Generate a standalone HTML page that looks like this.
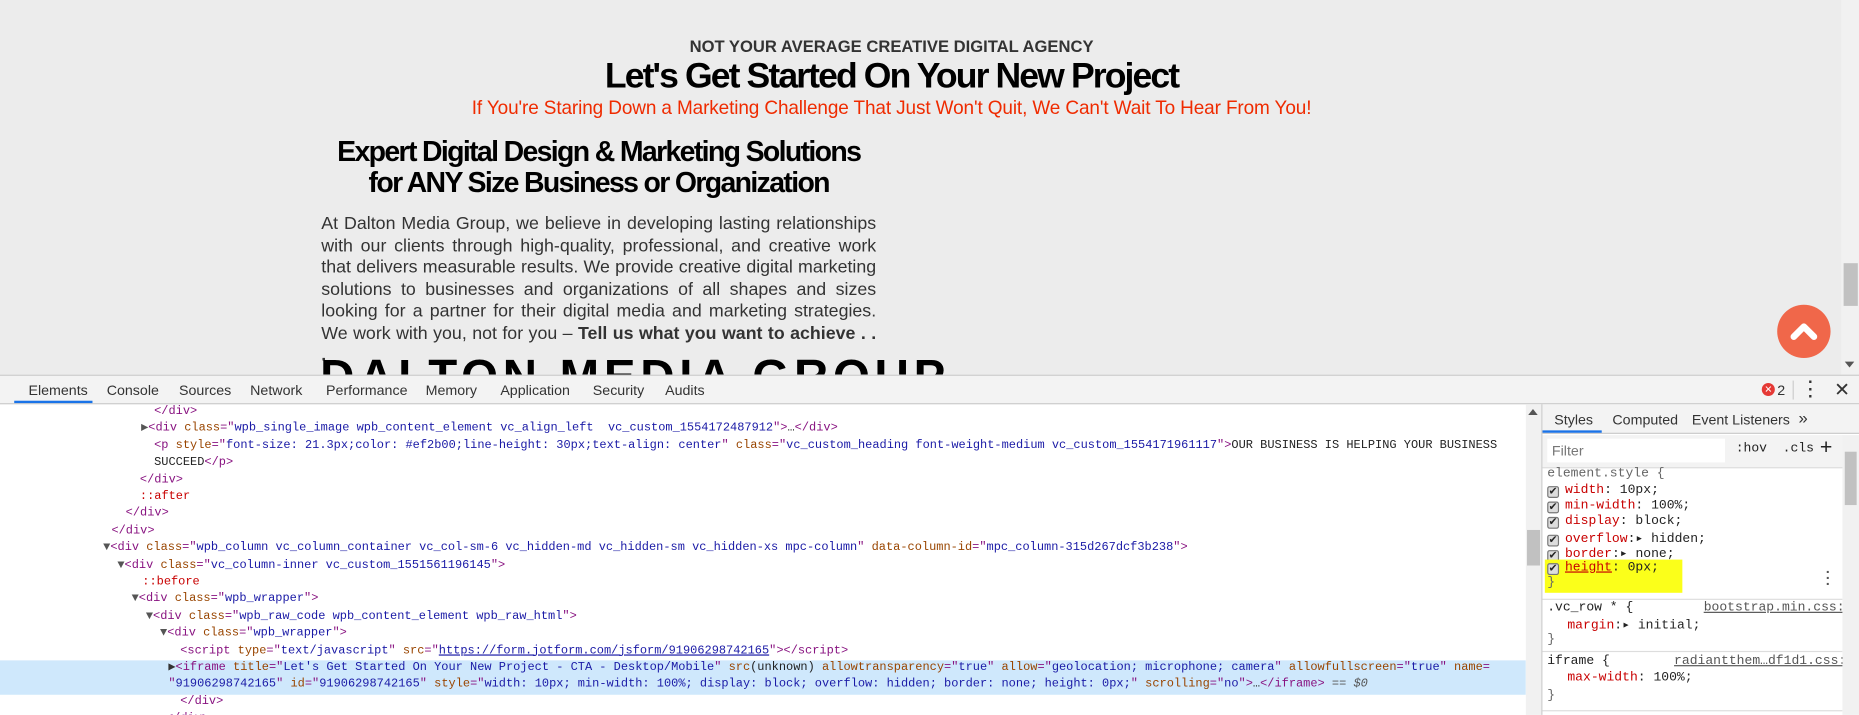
<!DOCTYPE html>
<html><head><meta charset="utf-8"><style>
*{margin:0;padding:0;box-sizing:border-box}
html,body{width:1859px;height:715px;overflow:hidden;background:#fff}
body{font-family:"Liberation Sans",sans-serif;position:relative}
#wrap{position:absolute;left:0;top:0;width:1568px;height:603px;transform:scale(1.18559);transform-origin:0 0}
#page{position:absolute;left:0;top:0;width:1568px;height:316px;background:#ececec;overflow:hidden}
.c{position:absolute;left:0;width:1504px;text-align:center;white-space:nowrap}
.bt{position:absolute;left:1555px;top:222px;width:12px;height:36px;background:#c1c1c1}
#tabs{position:absolute;left:0;top:316px;width:1568px;height:25px;background:#f3f3f3;border-top:1px solid #ccc;border-bottom:1px solid #ccc;font-size:12px;color:#333}
#tabs span{position:absolute;top:5px}
#el{position:absolute;left:0;top:341px;width:1287px;height:262px;font-family:"Liberation Mono",monospace;font-size:10.1px;white-space:pre;color:#222;overflow:hidden}
.l{position:absolute;height:14.4px;line-height:14.4px;left:0;width:1287px}
.t{color:#881280}.a{color:#994500}.v{color:#1a1aa6}.p{color:#c80000}.g{color:#555}
#sty{position:absolute;left:1300px;top:341px;width:268px;height:262px;border-left:1px solid #ccc;font-family:"Liberation Mono",monospace;font-size:11px;color:#222;overflow:hidden}
.r{position:absolute;white-space:pre}
.cb{display:inline-block;width:10px;height:10px;border:1px solid #777;background:#ddd;border-radius:2px;margin-right:5px;vertical-align:-1px;font-size:9px;line-height:8px;text-align:center;font-family:"DejaVu Sans";}
.pr{color:#c80000}
</style></head><body>
<div id="wrap">
<div id="page">
<div class="c" style="top:31px;font-size:14px;font-weight:bold;color:#333;">NOT YOUR AVERAGE CREATIVE DIGITAL AGENCY</div>
<div class="c" style="top:48px;font-size:30px;font-weight:bold;color:#000;letter-spacing:-1.6px">Let's Get Started On Your New Project</div>
<div class="c" style="top:83px;font-size:16px;color:#ef2b00;letter-spacing:-0.1px">If You're Staring Down a Marketing Challenge That Just Won't Quit, We Can't Wait To Hear From You!</div>
<div style="position:absolute;left:270px;width:470px;top:116px;text-align:center;font-size:24px;font-weight:bold;line-height:26px;letter-spacing:-1.4px;color:#000">Expert Digital Design &amp; Marketing Solutions<br>for ANY Size Business or Organization</div>
<div style="position:absolute;left:271px;width:468px;top:180px;font-size:15px;line-height:18.5px;color:#333;text-align:justify">At Dalton Media Group, we believe in developing lasting relationships with our clients through high-quality, professional, and creative work that delivers measurable results. We provide creative digital marketing solutions to businesses and organizations of all shapes and sizes looking for a partner for their digital media and marketing strategies. We work with you, not for you – <b>Tell us what you want to achieve . . .</b></div>
<div style="position:absolute;left:270px;top:296px;font-size:40px;font-weight:900;letter-spacing:4px;color:#000">DALTON MEDIA GROUP</div>
<div style="position:absolute;left:1499px;top:257px;width:45px;height:45px;border-radius:50%;background:#f0674a"></div>
<svg style="position:absolute;left:1499px;top:257px" width="45" height="45"><path d="M14 27 L22.5 18.5 L31 27" stroke="#fff" stroke-width="5.5" fill="none" stroke-linecap="round" stroke-linejoin="round"/></svg>
<div style="position:absolute;left:1553px;top:0;width:15px;height:316px;background:#f1f1f1"></div>
<div class="bt"></div>
<div style="position:absolute;left:1556px;top:305px;border:4px solid transparent;border-top:5px solid #555"></div>
</div>
<div id="tabs">
<div style="position:absolute;left:12px;top:0;width:66px;height:23px;border-bottom:2px solid #1a73e8"></div>
<span style="left:24px">Elements</span><span style="left:90px">Console</span><span style="left:151px">Sources</span><span style="left:211px">Network</span><span style="left:275px">Performance</span><span style="left:359px">Memory</span><span style="left:422px">Application</span><span style="left:500px">Security</span><span style="left:561px">Audits</span>
<div style="position:absolute;left:1486px;top:6px;width:11px;height:11px;border-radius:50%;background:#e53935;color:#fff;font-size:8px;line-height:11px;text-align:center">✕</div>
<span style="left:1499px;top:5px">2</span>
<div style="position:absolute;left:1512px;top:4px;width:1px;height:16px;background:#ccc"></div>
<span style="left:1525px;top:2px;font-weight:bold;line-height:6px;font-size:14px">·<br>·<br>·</span>
<span style="left:1547px;top:2px;font-size:16px">✕</span>
</div>
<div id="el">
<div class="l" style="top:0"><span style="margin-left:130px" class="t">&lt;/div&gt;</span></div>
<div class="l" style="top:14.4px"><span style="margin-left:119px" class="g">▶</span><span class="t">&lt;div </span><span class="a">class</span><span class="t">="</span><span class="v">wpb_single_image wpb_content_element vc_align_left  vc_custom_1554172487912</span><span class="t">"&gt;</span>…<span class="t">&lt;/div&gt;</span></div>
<div class="l" style="top:28.8px"><span style="margin-left:130px" class="t">&lt;p </span><span class="a">style</span><span class="t">="</span><span class="v">font-size: 21.3px;color: #ef2b00;line-height: 30px;text-align: center</span><span class="t">" </span><span class="a">class</span><span class="t">="</span><span class="v">vc_custom_heading font-weight-medium vc_custom_1554171961117</span><span class="t">"&gt;</span>OUR BUSINESS IS HELPING YOUR BUSINESS</div>
<div class="l" style="top:43.2px"><span style="margin-left:130px">SUCCEED</span><span class="t">&lt;/p&gt;</span></div>
<div class="l" style="top:57.6px"><span style="margin-left:118px" class="t">&lt;/div&gt;</span></div>
<div class="l" style="top:72px"><span style="margin-left:118px" class="p">::after</span></div>
<div class="l" style="top:86.4px"><span style="margin-left:106px" class="t">&lt;/div&gt;</span></div>
<div class="l" style="top:100.8px"><span style="margin-left:94px" class="t">&lt;/div&gt;</span></div>
<div class="l" style="top:115.2px"><span style="margin-left:87px" class="g">▼</span><span class="t">&lt;div </span><span class="a">class</span><span class="t">="</span><span class="v">wpb_column vc_column_container vc_col-sm-6 vc_hidden-md vc_hidden-sm vc_hidden-xs mpc-column</span><span class="t">" </span><span class="a">data-column-id</span><span class="t">="</span><span class="v">mpc_column-315d267dcf3b238</span><span class="t">"&gt;</span></div>
<div class="l" style="top:129.6px"><span style="margin-left:99px" class="g">▼</span><span class="t">&lt;div </span><span class="a">class</span><span class="t">="</span><span class="v">vc_column-inner vc_custom_1551561196145</span><span class="t">"&gt;</span></div>
<div class="l" style="top:144px"><span style="margin-left:120px" class="p">::before</span></div>
<div class="l" style="top:158.4px"><span style="margin-left:111px" class="g">▼</span><span class="t">&lt;div </span><span class="a">class</span><span class="t">="</span><span class="v">wpb_wrapper</span><span class="t">"&gt;</span></div>
<div class="l" style="top:172.8px"><span style="margin-left:123px" class="g">▼</span><span class="t">&lt;div </span><span class="a">class</span><span class="t">="</span><span class="v">wpb_raw_code wpb_content_element wpb_raw_html</span><span class="t">"&gt;</span></div>
<div class="l" style="top:187.2px"><span style="margin-left:135px" class="g">▼</span><span class="t">&lt;div </span><span class="a">class</span><span class="t">="</span><span class="v">wpb_wrapper</span><span class="t">"&gt;</span></div>
<div class="l" style="top:201.6px"><span style="margin-left:152px" class="t">&lt;script </span><span class="a">type</span><span class="t">="</span><span class="v">text/javascript</span><span class="t">" </span><span class="a">src</span><span class="t">="</span><span class="v" style="text-decoration:underline">https://form.jotform.com/jsform/91906298742165</span><span class="t">"&gt;&lt;/script&gt;</span></div>
<div class="l" style="top:216px;background:#cfe8fc;height:28.8px"></div>
<div class="l" style="top:216px"><span style="margin-left:142px;color:#333">▶</span><span class="t">&lt;iframe </span><span class="a">title</span><span class="t">="</span><span class="v">Let's Get Started On Your New Project - CTA - Desktop/Mobile</span><span class="t">" </span><span class="a">src</span>(unknown) <span class="a">allowtransparency</span><span class="t">="</span><span class="v">true</span><span class="t">" </span><span class="a">allow</span><span class="t">="</span><span class="v">geolocation; microphone; camera</span><span class="t">" </span><span class="a">allowfullscreen</span><span class="t">="</span><span class="v">true</span><span class="t">" </span><span class="a">name</span><span class="t">=</span></div>
<div class="l" style="top:230.4px"><span style="margin-left:142px" class="t">"</span><span class="v">91906298742165</span><span class="t">" </span><span class="a">id</span><span class="t">="</span><span class="v">91906298742165</span><span class="t">" </span><span class="a">style</span><span class="t">="</span><span class="v">width: 10px; min-width: 100%; display: block; overflow: hidden; border: none; height: 0px;</span><span class="t">" </span><span class="a">scrolling</span><span class="t">="</span><span class="v">no</span><span class="t">"&gt;</span>…<span class="t">&lt;/iframe&gt;</span> <span class="g">== <i>$0</i></span></div>
<div class="l" style="top:244.8px"><span style="margin-left:152px" class="t">&lt;/div&gt;</span></div>
<div class="l" style="top:259.2px"><span style="margin-left:140px" class="t">&lt;/div&gt;</span></div>
</div>
<div style="position:absolute;left:1287px;top:341px;width:13px;height:262px;background:#f1f1f1"></div>
<div style="position:absolute;left:1288px;top:447px;width:11px;height:30px;background:#c1c1c1"></div>
<div style="position:absolute;left:1289px;top:345px;border:4px solid transparent;border-bottom:5px solid #555;border-top:0"></div>
<div id="sty">
<div style="position:absolute;left:0;top:0;width:268px;height:25px;background:#f3f3f3;border-bottom:1px solid #ccc;font-family:'Liberation Sans';font-size:12px;color:#333">
<span style="position:absolute;left:10px;top:6px">Styles</span><span style="position:absolute;left:59px;top:6px">Computed</span><span style="position:absolute;left:126px;top:6px">Event Listeners</span><span style="position:absolute;left:216px;top:3px;font-size:14px">»</span>
<div style="position:absolute;left:0;top:22px;width:50px;height:2px;background:#1a73e8"></div></div>
<div style="position:absolute;left:0;top:26px;width:268px;height:28px;background:#f3f3f3;border-bottom:1px solid #ddd"></div>
<div style="position:absolute;left:4px;top:29px;width:150px;height:20px;background:#fff;font-family:'Liberation Sans';font-size:12px;color:#777;padding:3px 4px">Filter</div>
<span class="r" style="left:163px;top:32px">:hov  .cls</span><span class="r" style="left:234px;top:26px;font-size:18px;font-family:'Liberation Sans'">+</span>
<div class="r" style="left:4px;top:53px;color:#666">element.style {</div>
<div class="r" style="left:4px;top:67px"><span class="cb">✔</span><span class="pr">width</span>: 10px;</div>
<div class="r" style="left:4px;top:80px"><span class="cb">✔</span><span class="pr">min-width</span>: 100%;</div>
<div class="r" style="left:4px;top:93px"><span class="cb">✔</span><span class="pr">display</span>: block;</div>
<div class="r" style="left:4px;top:106px"><span class="cb">✔</span><span class="pr">overflow</span>:▸ hidden;</div>
<div class="r" style="left:4px;top:119px"><span class="cb">✔</span><span class="pr">border</span>:▸ none;</div>
<div style="position:absolute;left:2px;top:131px;width:116px;height:28px;background:#fbff1a"></div>
<div class="r" style="left:4px;top:132px"><span class="cb">✔</span><span class="pr" style="text-decoration:underline">height</span>: 0px;</div>
<div class="r" style="left:4px;top:145px;color:#666">}</div>
<div class="r" style="left:237px;top:140px;font-weight:bold;line-height:5px;font-size:12px;color:#555">·<br>·<br>·</div>
<div style="position:absolute;left:0;top:164px;width:253px;height:1px;background:#ddd"></div>
<div class="r" style="left:4px;top:166px">.vc_row * {</div><div class="r" style="left:136px;top:166px;color:#555;text-decoration:underline">bootstrap.min.css:2</div>
<div class="r" style="left:21px;top:179px"><span class="pr">margin</span>:▸ initial;</div>
<div class="r" style="left:4px;top:193px;color:#666">}</div>
<div style="position:absolute;left:0;top:208px;width:253px;height:1px;background:#ddd"></div>
<div class="r" style="left:4px;top:211px">iframe {</div><div class="r" style="left:111px;top:211px;color:#555;text-decoration:underline">radiantthem…df1d1.css:1</div>
<div class="r" style="left:21px;top:225px"><span class="pr">max-width</span>: 100%;</div>
<div class="r" style="left:4px;top:240px;color:#666">}</div>
<div style="position:absolute;left:0;top:258px;width:253px;height:1px;background:#ddd"></div>
<div style="position:absolute;left:253px;top:26px;width:14px;height:240px;background:#f1f1f1"></div>
<div style="position:absolute;left:255px;top:40px;width:10px;height:45px;background:#c1c1c1"></div>
</div>
</div>
</body></html>
